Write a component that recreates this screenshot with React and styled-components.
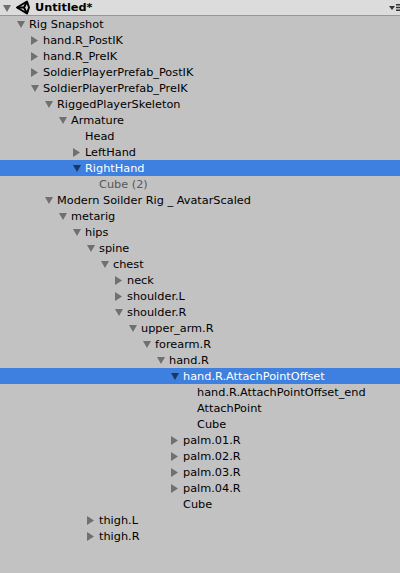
import styled, { createGlobalStyle } from 'styled-components';

const GlobalStyle = createGlobalStyle`
  html, body {
    margin: 0;
    padding: 0;
    background: #c2c2c2;
  }
`;

const Panel = styled.div`
  width: 400px;
  height: 573px;
  background: #c2c2c2;
  font-family: 'DejaVu Sans', Verdana, sans-serif;
  font-size: 11.3px;
  color: #000;
  overflow: hidden;
`;

const Header = styled.div`
  display: flex;
  align-items: center;
  height: 15px;
  background: #dcdcdc;
  border-bottom: 1px solid #979797;
  padding-left: 3px;
`;

const SceneName = styled.div`
  font-weight: bold;
  margin-left: 4px;
  flex: 1;
`;

const MenuIcon = styled.div`
  display: flex;
  align-items: center;
  gap: 1px;
  margin-right: -2px;
`;

const Row = styled.div`
  display: flex;
  align-items: center;
  height: 16px;
  padding-left: ${p => 17 + p.$depth * 14}px;
  background: ${p => (p.$selected ? '#3d80df' : 'transparent')};
  color: ${p => (p.$selected ? '#fff' : p.$inactive ? '#575757' : '#000')};
  white-space: nowrap;
`;

const Toggle = styled.div`
  width: 12px;
  height: 16px;
  display: flex;
  align-items: center;
  flex-shrink: 0;
`;

const Label = styled.span`
  line-height: 16px;
  padding-top: 1px;
`;

const Arrow = ({ open, color = '#6f6f6f' }) =>
  open ? (
    <svg width="8" height="7" viewBox="0 0 8 7" style={{ marginTop: 1 }}>
      <polygon points="0,0 8,0 4,7" fill={color} />
    </svg>
  ) : (
    <svg width="7" height="9" viewBox="0 0 7 9">
      <polygon points="0,0 7,4.5 0,9" fill={color} />
    </svg>
  );

const UnityLogo = () => (
  <svg width="16" height="15" viewBox="0 0 16 15" style={{ marginLeft: 4 }}>
    <path d="M2 7.5 L12 1.5 L14 7.5 L12 13.5 Z" fill="none" stroke="#000" strokeWidth="2" strokeLinejoin="round" />
    <path d="M2 7.5 H9 M9 7.5 L12 1.5 M9 7.5 L12 13.5" fill="none" stroke="#000" strokeWidth="2" />
  </svg>
);

// [label, depth, expanded (true/false/null for leaf), selected, inactive]
const rows = [
  ['Rig Snapshot', 0, true],
  ['hand.R_PostIK', 1, false],
  ['hand.R_PreIK', 1, false],
  ['SoldierPlayerPrefab_PostIK', 1, false],
  ['SoldierPlayerPrefab_PreIK', 1, true],
  ['RiggedPlayerSkeleton', 2, true],
  ['Armature', 3, true],
  ['Head', 4, null],
  ['LeftHand', 4, false],
  ['RightHand', 4, true, true],
  ['Cube (2)', 5, null, false, true],
  ['Modern Soilder Rig _ AvatarScaled', 2, true],
  ['metarig', 3, true],
  ['hips', 4, true],
  ['spine', 5, true],
  ['chest', 6, true],
  ['neck', 7, false],
  ['shoulder.L', 7, false],
  ['shoulder.R', 7, true],
  ['upper_arm.R', 8, true],
  ['forearm.R', 9, true],
  ['hand.R', 10, true],
  ['hand.R.AttachPointOffset', 11, true, true],
  ['hand.R.AttachPointOffset_end', 12, null],
  ['AttachPoint', 12, null],
  ['Cube', 12, null],
  ['palm.01.R', 11, false],
  ['palm.02.R', 11, false],
  ['palm.03.R', 11, false],
  ['palm.04.R', 11, false],
  ['Cube', 11, null],
  ['thigh.L', 5, false],
  ['thigh.R', 5, false],
];

function App() {
  return (
    <Panel>
      <GlobalStyle />
      <Header>
        <Arrow open color="#6f6f6f" />
        <UnityLogo />
        <SceneName>Untitled*</SceneName>
        <MenuIcon>
          <svg width="6" height="4" viewBox="0 0 6 4">
            <polygon points="0,0 6,0 3,4" fill="#333" />
          </svg>
          <svg width="6" height="7" viewBox="0 0 6 7">
            <rect x="0" y="0" width="6" height="1.5" fill="#333" />
            <rect x="0" y="2.75" width="6" height="1.5" fill="#333" />
            <rect x="0" y="5.5" width="6" height="1.5" fill="#333" />
          </svg>
        </MenuIcon>
      </Header>
      {rows.map(([label, depth, open, selected, inactive], i) => (
        <Row key={i} $depth={depth} $selected={selected} $inactive={inactive}>
          <Toggle>
            {open !== null && open !== undefined && (
              <Arrow open={open} color={selected ? '#1a3763' : '#707070'} />
            )}
          </Toggle>
          <Label>{label}</Label>
        </Row>
      ))}
    </Panel>
  );
}

export default App;
